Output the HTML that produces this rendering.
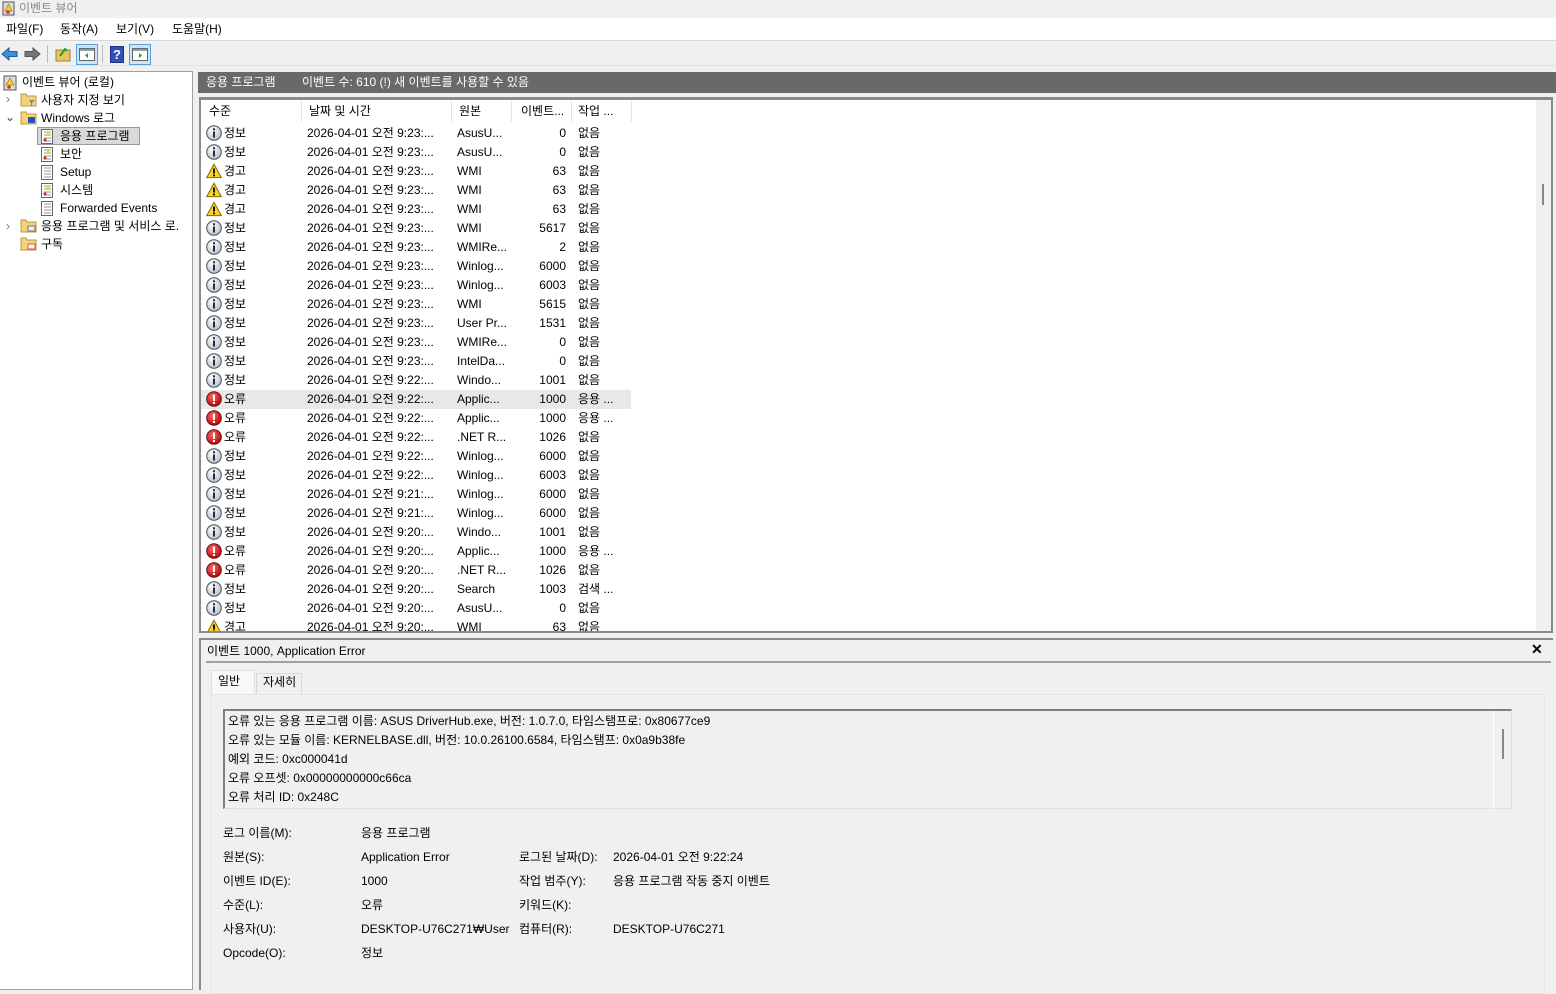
<!DOCTYPE html>
<html><head><meta charset="utf-8"><style>
*{box-sizing:border-box;margin:0;padding:0}
body{width:1556px;height:990px;overflow:hidden;background:#f0f0f0;font-family:"Liberation Sans","Noto Sans CJK KR",sans-serif;font-size:12px;line-height:15px;color:#000;position:relative}
.abs{position:absolute}
#title{left:0;top:0;width:1556px;height:18px;background:#f0f0f0;color:#8a8a8a;font-size:12px}
#menu{left:0;top:18px;width:1556px;height:23px;background:#fff;border-bottom:1px solid #d8d8d8}
#menu span{position:absolute;top:4px}
#tool{left:0;top:42px;width:1556px;height:24px;background:#f0f0f0;border-bottom:1px solid #e0e0e0}
#left{left:0;top:71px;width:193px;height:919px;background:#fff;border:1px solid #a0a0a0;border-left:none}
#left div{position:absolute;white-space:nowrap;font-size:12px}
#hdr{left:198px;top:72px;width:1358px;height:21px;background:#696969;color:#fff;font-size:12px}
#list{left:199px;top:97px;width:1354px;height:536px;background:#fff;border:2px solid #8a8a8a;border-top:3px solid #8a8a8a;overflow:hidden}
.row{position:absolute;left:0;height:19px;width:430px;white-space:nowrap}
.row span{position:absolute;top:2px}
.row svg{position:absolute;left:5px;top:1px}
.c1{left:23px}.c2{left:106px}.c3{left:256px}.c4{left:310px;width:55px;text-align:right}.c5{left:377px}
.hl{background:#e8e8e8}
#colh{position:absolute;left:0;top:0;width:1336px;height:22px;background:#fff}
#colh span{position:absolute;top:4px}
.sep{position:absolute;top:0;width:1px;height:22px;background:#e5e5e5}
#vs{position:absolute;right:0;top:0;width:15px;height:531px;background:#f0f0f0}
#det{left:199px;top:638px;width:1354px;height:352px;background:#f0f0f0;border-top:2px solid #8a8a8a;border-left:2px solid #8a8a8a}
</style></head><body>
<svg width="0" height="0" style="position:absolute">
<defs>
<radialGradient id="gi" cx="40%" cy="35%" r="70%"><stop offset="0" stop-color="#fff"/><stop offset="1" stop-color="#b8bcc4"/></radialGradient>
<radialGradient id="ge" cx="40%" cy="35%" r="70%"><stop offset="0" stop-color="#ff6a6a"/><stop offset="1" stop-color="#b00000"/></radialGradient>
<g id="ii"><circle cx="8" cy="8" r="7.3" fill="url(#gi)" stroke="#4a4f5a"/><rect x="7" y="6.5" width="2" height="6" fill="#1a2a4a"/><rect x="7" y="3.3" width="2" height="2" fill="#1a2a4a"/></g>
<g id="iw"><path d="M8 1.2 L15.3 14.6 H0.7Z" fill="#f5d52a" stroke="#8a6a00"/><rect x="7.1" y="5.5" width="1.8" height="5" fill="#000"/><rect x="7.1" y="11.5" width="1.8" height="1.8" fill="#000"/></g>
<g id="ie"><circle cx="8" cy="8" r="7.3" fill="url(#ge)" stroke="#6a1010"/><rect x="7" y="3.5" width="2" height="6.5" fill="#fff"/><rect x="7" y="11" width="2" height="2" fill="#fff"/></g>
</defs></svg>

<div id="title" class="abs">
<svg class="abs" style="left:2px;top:1px" width="13" height="15"><rect x="1" y="1" width="11" height="13" fill="#ddd" stroke="#555"/><path d="M6.5 3 L10 10 H3Z" fill="#f5d52a" stroke="#8a6a00" stroke-width=".6"/><circle cx="6" cy="11" r="1.8" fill="#c33"/></svg>
<span class="abs" style="left:19px;top:1px">이벤트 뷰어</span></div>
<div id="menu" class="abs">
<span style="left:6px">파일(F)</span><span style="left:60px">동작(A)</span><span style="left:116px">보기(V)</span><span style="left:172px">도움말(H)</span></div>
<div id="tool" class="abs">
<svg class="abs" style="left:1px;top:5px" width="40" height="14"><path d="M1 7 L8 1 V4.5 H16 V9.5 H8 V13Z" fill="#3c8fd8" stroke="#1d5a9a"/><path d="M39 7 L32 1 V4.5 H24 V9.5 H32 V13Z" fill="#777" stroke="#555"/></svg>
<div class="abs" style="left:47px;top:3px;width:1px;height:18px;background:#bbb"></div>
<svg class="abs" style="left:55px;top:4px" width="16" height="16"><rect x="1" y="4" width="14" height="11" fill="#e8c560" stroke="#a08030"/><path d="M5 10 L10 3 L12 5" stroke="#2a9a2a" stroke-width="2" fill="none"/></svg>
<div class="abs" style="left:76px;top:2px;width:22px;height:21px;background:#cce4f7;border:1px solid #5aa0dc"></div>
<svg class="abs" style="left:79px;top:6px" width="16" height="13"><rect x=".5" y=".5" width="15" height="12" fill="#fff" stroke="#666"/><rect x="1" y="1" width="14" height="2" fill="#7aa"/><path d="M9 5 L6 7.5 L9 10Z" fill="#2a9a2a"/></svg>
<div class="abs" style="left:102px;top:3px;width:1px;height:18px;background:#bbb"></div>
<svg class="abs" style="left:110px;top:4px" width="14" height="17"><rect x=".5" y=".5" width="13" height="16" fill="#3050b8" stroke="#203080"/><text x="3" y="13" fill="#fff" font-size="13" font-family="Liberation Sans" font-weight="bold">?</text></svg>
<div class="abs" style="left:129px;top:2px;width:22px;height:21px;background:#cce4f7;border:1px solid #5aa0dc"></div>
<svg class="abs" style="left:132px;top:6px" width="16" height="13"><rect x=".5" y=".5" width="15" height="12" fill="#fff" stroke="#666"/><rect x="1" y="1" width="14" height="2" fill="#7aa"/><path d="M7 5 L10 7.5 L7 10Z" fill="#2a9a2a"/></svg>
</div>

<div id="left" class="abs">
<svg class="abs" style="left:3px;top:3px" width="14" height="16"><rect x="1" y="1" width="12" height="14" fill="#ddd" stroke="#555"/><path d="M7 3 L11 10 H3Z" fill="#f5d52a" stroke="#8a6a00" stroke-width=".6"/><circle cx="6" cy="12" r="1.8" fill="#c33"/></svg>
<div style="left:22px;top:3px">이벤트 뷰어 (로컬)</div>
<div style="left:6px;top:20px;color:#777">›</div>
<svg class="abs" style="left:20px;top:20px" width="17" height="15"><path d="M1 2 H6 L7 4 H16 V14 H1Z" fill="#f3d27a" stroke="#b89840"/><path d="M9 8 H15 L12 11 V14 H11 V11Z" fill="#6a8ab0"/></svg>
<div style="left:41px;top:21px">사용자 지정 보기</div>
<div style="left:5px;top:38px;color:#444">⌄</div>
<svg class="abs" style="left:20px;top:38px" width="17" height="15"><path d="M1 2 H6 L7 4 H16 V14 H1Z" fill="#f3d27a" stroke="#b89840"/><rect x="8" y="7" width="7" height="6" fill="#2a50b0"/></svg>
<div style="left:41px;top:39px">Windows 로그</div>
<div style="left:37px;top:55px;width:103px;height:18px;background:#d9d9d9;border:1px solid #999"></div>
<svg class="abs" style="left:40px;top:57px" width="14" height="15"><rect x="1.5" y=".5" width="11" height="14" fill="#fff" stroke="#666"/><path d="M4 3H11M4 6H11M4 9H11M4 12H11" stroke="#999"/><path d="M8 2 L11 7 H5Z" fill="#f5d52a"/><circle cx="5" cy="11" r="1.6" fill="#c33"/></svg>
<div style="left:60px;top:57px">응용 프로그램</div>
<svg class="abs" style="left:40px;top:75px" width="14" height="15"><rect x="1.5" y=".5" width="11" height="14" fill="#fff" stroke="#666"/><path d="M4 3H11M4 6H11M4 9H11M4 12H11" stroke="#999"/><path d="M8 2 L11 7 H5Z" fill="#f5d52a"/><circle cx="5" cy="11" r="1.6" fill="#c33"/></svg>
<div style="left:60px;top:75px">보안</div>
<svg class="abs" style="left:40px;top:93px" width="14" height="15"><rect x="1.5" y=".5" width="11" height="14" fill="#fff" stroke="#666"/><path d="M4 3H11M4 6H11M4 9H11M4 12H11" stroke="#999"/></svg>
<div style="left:60px;top:93px">Setup</div>
<svg class="abs" style="left:40px;top:111px" width="14" height="15"><rect x="1.5" y=".5" width="11" height="14" fill="#fff" stroke="#666"/><path d="M4 3H11M4 6H11M4 9H11M4 12H11" stroke="#999"/><path d="M8 2 L11 7 H5Z" fill="#f5d52a"/><circle cx="5" cy="11" r="1.6" fill="#c33"/></svg>
<div style="left:60px;top:111px">시스템</div>
<svg class="abs" style="left:40px;top:129px" width="14" height="15"><rect x="1.5" y=".5" width="11" height="14" fill="#fff" stroke="#666"/><path d="M4 3H11M4 6H11M4 9H11M4 12H11" stroke="#999"/></svg>
<div style="left:60px;top:129px">Forwarded Events</div>
<div style="left:6px;top:147px;color:#777">›</div>
<svg class="abs" style="left:20px;top:146px" width="17" height="15"><path d="M1 2 H6 L7 4 H16 V14 H1Z" fill="#f3d27a" stroke="#b89840"/><rect x="8" y="8" width="7" height="5" fill="#eee" stroke="#777"/></svg>
<div style="left:41px;top:147px">응용 프로그램 및 서비스 로.</div>
<svg class="abs" style="left:20px;top:164px" width="17" height="15"><path d="M1 2 H6 L7 4 H16 V14 H1Z" fill="#f3d27a" stroke="#b89840"/><rect x="8" y="8" width="7" height="5" fill="#fff" stroke="#c55"/></svg>
<div style="left:41px;top:165px">구독</div>
</div>

<div id="hdr" class="abs"><span class="abs" style="left:8px;top:3px">응용 프로그램</span><span class="abs" style="left:104px;top:3px">이벤트 수: 610 (!) 새 이벤트를 사용할 수 있음</span></div>

<div id="list" class="abs">
<div id="colh"><span style="left:8px">수준</span><span style="left:108px">날짜 및 시간</span><span style="left:258px">원본</span><span style="left:320px">이벤트...</span><span style="left:377px">작업 ...</span>
<div class="sep" style="left:100px"></div><div class="sep" style="left:250px"></div><div class="sep" style="left:310px"></div><div class="sep" style="left:370px"></div><div class="sep" style="left:430px"></div></div>
<div class="row" style="top:24px"><svg width="16" height="16"><use href="#ii"/></svg><span class="c1">정보</span><span class="c2">2026-04-01 오전 9:23:...</span><span class="c3">AsusU...</span><span class="c4">0</span><span class="c5">없음</span></div>
<div class="row" style="top:43px"><svg width="16" height="16"><use href="#ii"/></svg><span class="c1">정보</span><span class="c2">2026-04-01 오전 9:23:...</span><span class="c3">AsusU...</span><span class="c4">0</span><span class="c5">없음</span></div>
<div class="row" style="top:62px"><svg width="16" height="16"><use href="#iw"/></svg><span class="c1">경고</span><span class="c2">2026-04-01 오전 9:23:...</span><span class="c3">WMI</span><span class="c4">63</span><span class="c5">없음</span></div>
<div class="row" style="top:81px"><svg width="16" height="16"><use href="#iw"/></svg><span class="c1">경고</span><span class="c2">2026-04-01 오전 9:23:...</span><span class="c3">WMI</span><span class="c4">63</span><span class="c5">없음</span></div>
<div class="row" style="top:100px"><svg width="16" height="16"><use href="#iw"/></svg><span class="c1">경고</span><span class="c2">2026-04-01 오전 9:23:...</span><span class="c3">WMI</span><span class="c4">63</span><span class="c5">없음</span></div>
<div class="row" style="top:119px"><svg width="16" height="16"><use href="#ii"/></svg><span class="c1">정보</span><span class="c2">2026-04-01 오전 9:23:...</span><span class="c3">WMI</span><span class="c4">5617</span><span class="c5">없음</span></div>
<div class="row" style="top:138px"><svg width="16" height="16"><use href="#ii"/></svg><span class="c1">정보</span><span class="c2">2026-04-01 오전 9:23:...</span><span class="c3">WMIRe...</span><span class="c4">2</span><span class="c5">없음</span></div>
<div class="row" style="top:157px"><svg width="16" height="16"><use href="#ii"/></svg><span class="c1">정보</span><span class="c2">2026-04-01 오전 9:23:...</span><span class="c3">Winlog...</span><span class="c4">6000</span><span class="c5">없음</span></div>
<div class="row" style="top:176px"><svg width="16" height="16"><use href="#ii"/></svg><span class="c1">정보</span><span class="c2">2026-04-01 오전 9:23:...</span><span class="c3">Winlog...</span><span class="c4">6003</span><span class="c5">없음</span></div>
<div class="row" style="top:195px"><svg width="16" height="16"><use href="#ii"/></svg><span class="c1">정보</span><span class="c2">2026-04-01 오전 9:23:...</span><span class="c3">WMI</span><span class="c4">5615</span><span class="c5">없음</span></div>
<div class="row" style="top:214px"><svg width="16" height="16"><use href="#ii"/></svg><span class="c1">정보</span><span class="c2">2026-04-01 오전 9:23:...</span><span class="c3">User Pr...</span><span class="c4">1531</span><span class="c5">없음</span></div>
<div class="row" style="top:233px"><svg width="16" height="16"><use href="#ii"/></svg><span class="c1">정보</span><span class="c2">2026-04-01 오전 9:23:...</span><span class="c3">WMIRe...</span><span class="c4">0</span><span class="c5">없음</span></div>
<div class="row" style="top:252px"><svg width="16" height="16"><use href="#ii"/></svg><span class="c1">정보</span><span class="c2">2026-04-01 오전 9:23:...</span><span class="c3">IntelDa...</span><span class="c4">0</span><span class="c5">없음</span></div>
<div class="row" style="top:271px"><svg width="16" height="16"><use href="#ii"/></svg><span class="c1">정보</span><span class="c2">2026-04-01 오전 9:22:...</span><span class="c3">Windo...</span><span class="c4">1001</span><span class="c5">없음</span></div>
<div class="row hl" style="top:290px"><svg width="16" height="16"><use href="#ie"/></svg><span class="c1">오류</span><span class="c2">2026-04-01 오전 9:22:...</span><span class="c3">Applic...</span><span class="c4">1000</span><span class="c5">응용 ...</span></div>
<div class="row" style="top:309px"><svg width="16" height="16"><use href="#ie"/></svg><span class="c1">오류</span><span class="c2">2026-04-01 오전 9:22:...</span><span class="c3">Applic...</span><span class="c4">1000</span><span class="c5">응용 ...</span></div>
<div class="row" style="top:328px"><svg width="16" height="16"><use href="#ie"/></svg><span class="c1">오류</span><span class="c2">2026-04-01 오전 9:22:...</span><span class="c3">.NET R...</span><span class="c4">1026</span><span class="c5">없음</span></div>
<div class="row" style="top:347px"><svg width="16" height="16"><use href="#ii"/></svg><span class="c1">정보</span><span class="c2">2026-04-01 오전 9:22:...</span><span class="c3">Winlog...</span><span class="c4">6000</span><span class="c5">없음</span></div>
<div class="row" style="top:366px"><svg width="16" height="16"><use href="#ii"/></svg><span class="c1">정보</span><span class="c2">2026-04-01 오전 9:22:...</span><span class="c3">Winlog...</span><span class="c4">6003</span><span class="c5">없음</span></div>
<div class="row" style="top:385px"><svg width="16" height="16"><use href="#ii"/></svg><span class="c1">정보</span><span class="c2">2026-04-01 오전 9:21:...</span><span class="c3">Winlog...</span><span class="c4">6000</span><span class="c5">없음</span></div>
<div class="row" style="top:404px"><svg width="16" height="16"><use href="#ii"/></svg><span class="c1">정보</span><span class="c2">2026-04-01 오전 9:21:...</span><span class="c3">Winlog...</span><span class="c4">6000</span><span class="c5">없음</span></div>
<div class="row" style="top:423px"><svg width="16" height="16"><use href="#ii"/></svg><span class="c1">정보</span><span class="c2">2026-04-01 오전 9:20:...</span><span class="c3">Windo...</span><span class="c4">1001</span><span class="c5">없음</span></div>
<div class="row" style="top:442px"><svg width="16" height="16"><use href="#ie"/></svg><span class="c1">오류</span><span class="c2">2026-04-01 오전 9:20:...</span><span class="c3">Applic...</span><span class="c4">1000</span><span class="c5">응용 ...</span></div>
<div class="row" style="top:461px"><svg width="16" height="16"><use href="#ie"/></svg><span class="c1">오류</span><span class="c2">2026-04-01 오전 9:20:...</span><span class="c3">.NET R...</span><span class="c4">1026</span><span class="c5">없음</span></div>
<div class="row" style="top:480px"><svg width="16" height="16"><use href="#ii"/></svg><span class="c1">정보</span><span class="c2">2026-04-01 오전 9:20:...</span><span class="c3">Search</span><span class="c4">1003</span><span class="c5">검색 ...</span></div>
<div class="row" style="top:499px"><svg width="16" height="16"><use href="#ii"/></svg><span class="c1">정보</span><span class="c2">2026-04-01 오전 9:20:...</span><span class="c3">AsusU...</span><span class="c4">0</span><span class="c5">없음</span></div>
<div class="row" style="top:518px"><svg width="16" height="16"><use href="#iw"/></svg><span class="c1">경고</span><span class="c2">2026-04-01 오전 9:20:...</span><span class="c3">WMI</span><span class="c4">63</span><span class="c5">없음</span></div>
<div id="vs"><div style="position:absolute;left:6px;top:84px;width:2px;height:21px;background:#888"></div></div>
</div>

<div id="det" class="abs">
<span class="abs" style="left:6px;top:4px">이벤트 1000, Application Error</span>
<span class="abs" style="left:1330px;top:2px;font-weight:bold;font-size:14px">✕</span>
<div class="abs" style="left:5px;top:21px;width:1345px;height:2px;background:#a0a0a0"></div>
<div class="abs" style="left:10px;top:30px;width:44px;height:24px;background:#f8f8f8;border:1px solid #e0e0e0;border-bottom:none"></div>
<span class="abs" style="left:17px;top:34px">일반</span>
<div class="abs" style="left:55px;top:33px;width:46px;height:21px;border:1px solid #d8d8d8;border-bottom:none"></div>
<span class="abs" style="left:62px;top:35px">자세히</span>
<div class="abs" style="left:10px;top:54px;width:1334px;height:300px;border:1px solid #e4e4e4;background:#f0f0f0"></div>
<div class="abs" style="left:22px;top:69px;width:1289px;height:100px;border:1px solid #e0e0e0;border-top:2px solid #808080;border-left:2px solid #808080;background:#f0f0f0;line-height:19px;padding:1px 0 0 3px">
오류 있는 응용 프로그램 이름: ASUS DriverHub.exe, 버전: 1.0.7.0, 타임스탬프로: 0x80677ce9<br>
오류 있는 모듈 이름: KERNELBASE.dll, 버전: 10.0.26100.6584, 타임스탬프: 0x0a9b38fe<br>
예외 코드: 0xc000041d<br>
오류 오프셋: 0x00000000000c66ca<br>
오류 처리 ID: 0x248C
<div class="abs" style="left:1268px;top:0;width:1px;height:98px;background:#fff"></div>
<div class="abs" style="left:1277px;top:18px;width:2px;height:30px;background:#888"></div>
</div>
<span class="abs" style="left:22px;top:186px">로그 이름(M):</span><span class="abs" style="left:160px;top:186px">응용 프로그램</span>
<span class="abs" style="left:22px;top:210px">원본(S):</span><span class="abs" style="left:160px;top:210px">Application Error</span>
<span class="abs" style="left:318px;top:210px">로그된 날짜(D):</span><span class="abs" style="left:412px;top:210px">2026-04-01 오전 9:22:24</span>
<span class="abs" style="left:22px;top:234px">이벤트 ID(E):</span><span class="abs" style="left:160px;top:234px">1000</span>
<span class="abs" style="left:318px;top:234px">작업 범주(Y):</span><span class="abs" style="left:412px;top:234px">응용 프로그램 작동 중지 이벤트</span>
<span class="abs" style="left:22px;top:258px">수준(L):</span><span class="abs" style="left:160px;top:258px">오류</span>
<span class="abs" style="left:318px;top:258px">키워드(K):</span>
<span class="abs" style="left:22px;top:282px">사용자(U):</span><span class="abs" style="left:160px;top:282px">DESKTOP-U76C271₩User</span>
<span class="abs" style="left:318px;top:282px">컴퓨터(R):</span><span class="abs" style="left:412px;top:282px">DESKTOP-U76C271</span>
<span class="abs" style="left:22px;top:306px">Opcode(O):</span><span class="abs" style="left:160px;top:306px">정보</span>
</div>
</body></html>
